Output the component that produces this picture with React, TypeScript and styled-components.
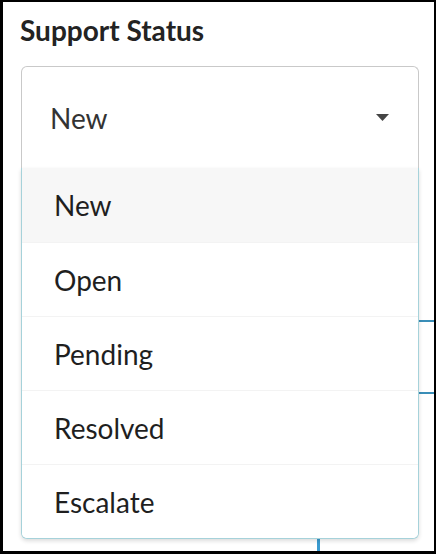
import React from 'react';
import styled, { createGlobalStyle } from 'styled-components';

const GlobalStyle = createGlobalStyle`
  html, body {
    margin: 0;
    padding: 0;
    background: #ffffff;
  }
  * {
    box-sizing: border-box;
  }
`;

const Frame = styled.div`
  width: 436px;
  height: 554px;
  border-style: solid;
  border-color: #000000;
  border-width: 2px 2px 3px 3px;
  background: #ffffff;
  overflow: hidden;
  font-family: Lato, 'Liberation Sans', sans-serif;
  padding: 11px 0 0 17px;
`;

const Title = styled.h2`
  margin: 0;
  font-size: 28px;
  font-weight: 700;
  line-height: 34px;
  color: #232323;
`;

const Field = styled.div`
  position: relative;
  width: 398px;
  margin: 19px 0 0 1px;
`;

const SelectBox = styled.div`
  height: 102px;
  border: 1.5px solid #c9c9c9;
  border-bottom: none;
  border-radius: 6px 6px 0 0;
  display: flex;
  align-items: center;
  justify-content: space-between;
  padding: 0 29px 0 28px;
  font-size: 28px;
  color: #333333;
`;

const Menu = styled.ul`
  position: absolute;
  top: 100%;
  left: 0;
  right: 0;
  margin: 0;
  padding: 0;
  list-style: none;
  background: #ffffff;
  border: 1.5px solid #a6d2da;
  border-top: none;
  border-radius: 0 0 6px 6px;
  box-shadow: 0 2px 4px rgba(0, 0, 0, 0.14);
  z-index: 10;
  overflow: hidden;
`;

const Item = styled.li<{ $active?: boolean }>`
  height: 74px;
  display: flex;
  align-items: center;
  padding-left: 32px;
  font-size: 28px;
  color: #1f1f1f;
  background: ${p => (p.$active ? '#f7f7f7' : '#ffffff')};
  & + & {
    border-top: 1px solid #f3f3f3;
  }
`;

const Backdrop = styled.div`
  width: 460px;
  margin-left: 1px;
  display: grid;
  grid-template-rows: 152px 74px auto;
`;

const Band = styled.div`
  border-top: 2px solid #3a8eb8;
  border-bottom: 2px solid #3a8eb8;
`;

const Footer = styled.div`
  display: grid;
  grid-template-columns: 296px 1fr;
  height: 200px;
`;

const Cell = styled.div<{ $divider?: boolean }>`
  border-left: ${p => (p.$divider ? '3px solid #3a9bd0' : 'none')};
`;

const statuses = ['New', 'Open', 'Pending', 'Resolved', 'Escalate'];

export default function App() {
  return (
    <>
      <GlobalStyle />
      <Frame>
        <Title>Support Status</Title>
        <Field>
          <SelectBox>
            <span>New</span>
            <svg width="13" height="7" viewBox="0 0 13 7">
              <path d="M0 0 H13 L6.5 7 Z" fill="#454545" />
            </svg>
          </SelectBox>
          <Menu>
            {statuses.map((s, i) => (
              <Item key={s} $active={i === 0}>
                {s}
              </Item>
            ))}
          </Menu>
        </Field>
        <Backdrop>
          <div />
          <Band />
          <Footer>
            <Cell />
            <Cell $divider />
          </Footer>
        </Backdrop>
      </Frame>
    </>
  );
}
